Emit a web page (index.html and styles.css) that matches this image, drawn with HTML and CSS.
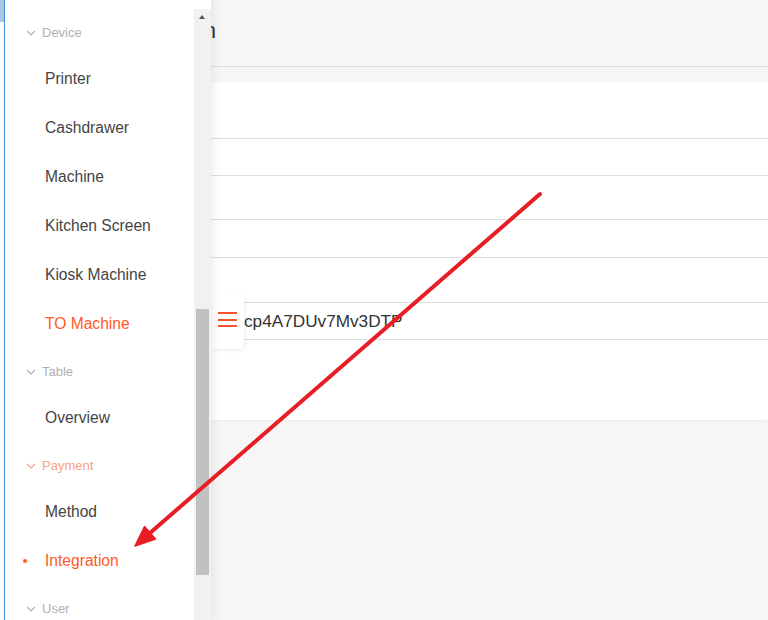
FILE: index.html
```html
<!DOCTYPE html>
<html lang="en">
<head>
<meta charset="utf-8">
<title>Payment Integration</title>
<link rel="stylesheet" href="styles.css">
</head>
<body>
<div class="screen">
  <div class="edge"><div class="edge-top"></div></div>

  <main class="main">
    <header class="page-head">
      <h1 class="title">Payment Integration</h1>
    </header>
    <section class="card">
      <div class="row r1"></div>
      <div class="row r2"></div>
      <div class="row r3"></div>
      <div class="row r4"></div>
      <div class="row r5"></div>
      <div class="row r6"><span class="value">cp4A7DUv7Mv3DTP</span></div>
      <div class="row r7"></div>
    </section>
  </main>

  <aside class="drawer">
    <nav class="menu">
      <div class="group">
        <div class="group-head"><svg class="chev" viewBox="0 0 10 6"><path d="M1 1l4 4 4-4"/></svg>Device</div>
        <div class="item">Printer</div>
        <div class="item">Cashdrawer</div>
        <div class="item">Machine</div>
        <div class="item">Kitchen Screen</div>
        <div class="item">Kiosk Machine</div>
        <div class="item item-hl">TO Machine</div>
      </div>
      <div class="group">
        <div class="group-head"><svg class="chev" viewBox="0 0 10 6"><path d="M1 1l4 4 4-4"/></svg>Table</div>
        <div class="item">Overview</div>
      </div>
      <div class="group">
        <div class="group-head group-head-active"><svg class="chev" viewBox="0 0 10 6"><path d="M1 1l4 4 4-4"/></svg>Payment</div>
        <div class="item">Method</div>
        <div class="item item-hl item-current">Integration</div>
      </div>
      <div class="group">
        <div class="group-head"><svg class="chev" viewBox="0 0 10 6"><path d="M1 1l4 4 4-4"/></svg>User</div>
      </div>
    </nav>
    <div class="scrollbar">
      <div class="sb-up"></div>
      <div class="sb-thumb"></div>
    </div>
  </aside>

  <button class="toggle" type="button" aria-label="Menu">
    <span></span><span></span><span></span>
  </button>

  <svg class="annot" viewBox="0 0 768 620" width="768" height="620">
    <line x1="540" y1="194" x2="150" y2="533" stroke="#e81e26" stroke-width="4" stroke-linecap="round"/>
    <polygon points="135,546 144.5,526.5 155.5,539" fill="#e81e26" stroke="#e81e26" stroke-width="1.5" stroke-linejoin="round"/>
  </svg>
</div>
</body>
</html>
```
FILE: styles.css
```css
* { box-sizing: border-box; }
html, body {
  margin: 0;
  padding: 0;
  width: 768px;
  height: 620px;
  overflow: hidden;
  background: #f6f6f6;
  font-family: "Liberation Sans", Arial, sans-serif;
}
.screen {
  position: relative;
  width: 768px;
  height: 620px;
  overflow: hidden;
  display: flex;
}
.edge {
  width: 5px;
  flex: 0 0 5px;
  height: 620px;
  border-right: 1px solid #3d8fe0;
  background: #fff;
  position: relative;
  z-index: 6;
}
.edge-top {
  height: 22px;
  background: #acc6e2;
}
.main {
  flex: 1;
  display: flex;
  flex-direction: column;
}
.page-head {
  height: 67px;
  border-bottom: 1px solid #dcdcdc;
  display: flex;
  align-items: center;
  padding-left: 14px;
}
.title {
  margin: 0;
  font-size: 22px;
  font-weight: normal;
  color: #333;
  padding-bottom: 4px;
}
.card {
  margin-top: 15px;
  background: #fff;
  box-shadow: 0 1px 3px rgba(0,0,0,0.04);
  display: flex;
  flex-direction: column;
}
.row {
  border-bottom: 1px solid #dedede;
  display: flex;
  align-items: center;
  padding-left: 239px;
}
.r1 { height: 57px; }
.r2 { height: 37px; }
.r3 { height: 44px; }
.r4 { height: 38px; }
.r5 { height: 45px; }
.r6 { height: 37px; }
.r7 { height: 80px; border-bottom: none; }
.value {
  font-size: 17.2px;
  color: #333;
  padding-top: 1px;
}
.drawer {
  position: absolute;
  left: 5px;
  top: 0;
  width: 206px;
  height: 620px;
  background: #fff;
  display: flex;
  box-shadow: 3px 0 8px rgba(0,0,0,0.07);
  z-index: 5;
}
.menu {
  flex: 1;
  padding-top: 11px;
  overflow: hidden;
}
.group { padding-bottom: 2px; }
.group-head {
  height: 43px;
  display: flex;
  align-items: center;
  padding-left: 21px;
  font-size: 13px;
  color: #b0b0b0;
}
.group-head-active { color: #f9a285; }
.chev {
  width: 10px;
  height: 6px;
  margin-right: 6px;
  fill: none;
  stroke: currentColor;
  stroke-width: 1.1;
}
.item {
  height: 49px;
  display: flex;
  align-items: center;
  padding-left: 40px;
  font-size: 15.6px;
  color: #444;
  position: relative;
}
.item-hl { color: #ff5a26; }
.item-current::before {
  content: "";
  position: absolute;
  left: 18px;
  top: 23px;
  width: 4px;
  height: 4px;
  border-radius: 50%;
  background: #ff5a26;
}
.scrollbar {
  width: 17px;
  flex: 0 0 17px;
  margin-top: 9px;
  background: #f1f1f1;
  position: relative;
}
.sb-up {
  position: absolute;
  left: 5px;
  top: 6px;
  width: 0;
  height: 0;
  border-left: 3.5px solid transparent;
  border-right: 3.5px solid transparent;
  border-bottom: 4px solid #555;
}
.sb-thumb {
  position: absolute;
  left: 2px;
  right: 2px;
  top: 300px;
  height: 266px;
  background: #c1c1c1;
}
.toggle {
  position: absolute;
  left: 211px;
  top: 294px;
  width: 33px;
  height: 55px;
  padding: 18px 0 0 0;
  border: none;
  background: #fff;
  border-radius: 0 5px 5px 0;
  box-shadow: 1px 1px 4px rgba(0,0,0,0.08);
  display: flex;
  flex-direction: column;
  justify-content: flex-start;
  align-items: center;
  gap: 4.5px;
  z-index: 4;
}
.toggle span {
  display: block;
  width: 19px;
  height: 2px;
  flex: 0 0 2px;
  background: #f4562a;
}
.annot {
  position: absolute;
  left: 0;
  top: 0;
  z-index: 10;
  pointer-events: none;
}
```
